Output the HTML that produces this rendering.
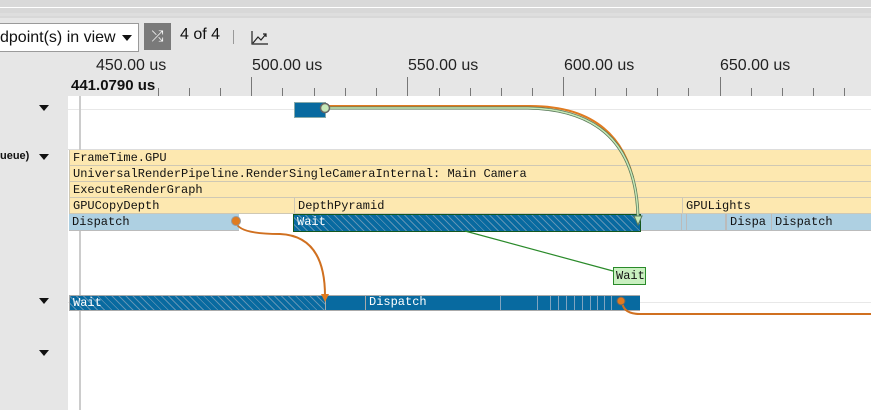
<!DOCTYPE html>
<html><head><style>
*{margin:0;padding:0;box-sizing:border-box}
body{width:871px;height:410px;overflow:hidden;background:#e6e6e6;position:relative;font-family:"Segoe UI","Liberation Sans",sans-serif}
.a{position:absolute}
.m{font-family:"Liberation Mono",monospace;font-size:12px;line-height:16px;color:#111;white-space:nowrap;overflow:hidden;padding-left:3px}
.y{background:#fde8b0;border-bottom:1px solid #cfc8b4;border-left:1px solid #cfc8b4}
.tri{width:0;height:0;border-left:5px solid transparent;border-right:5px solid transparent;border-top:6px solid #111}
.hatch{background:repeating-linear-gradient(45deg,#086aa0 0 4px,#5f93b5 4px 5px)}
</style></head><body>
<div class="a" style="left:0;top:0;width:871px;height:7px;background:#d9d9d9"></div>
<div class="a" style="left:0;top:7px;width:871px;height:1px;background:#fff"></div>
<div class="a" style="left:0;top:8px;width:871px;height:10px;background:#d8d8d8"></div>
<div class="a" style="left:0;top:13px;width:871px;height:3px;background:#dedede"></div>
<div class="a" style="left:-2px;top:23px;width:141px;height:29px;background:#fff;border:1px solid #9a9a9a;font-size:16px;line-height:27px;padding-left:1px;color:#111;white-space:nowrap;overflow:hidden">dpoint(s) in view</div>
<div class="a tri" style="left:122px;top:35px"></div>
<div class="a" style="left:144px;top:23px;width:27px;height:27px;background:#7a7a7a;color:#fff;font-size:15px;text-align:center;line-height:27px">⤮</div>
<div class="a" style="left:180px;top:26px;font-size:16px;color:#111">4 of 4</div>
<div class="a" style="left:233px;top:30px;width:1px;height:14px;background:#999"></div>
<svg class="a" style="left:251px;top:30px" width="18" height="16"><path d="M1 1V14H17M2 13L7 7L10 10L15 4M12 4H15V7" fill="none" stroke="#222" stroke-width="1.2"/></svg>
<div class="a" style="left:96px;top:57px;font-size:16px;color:#222">450.00 us</div>
<div class="a" style="left:252px;top:57px;font-size:16px;color:#222">500.00 us</div>
<div class="a" style="left:408px;top:57px;font-size:16px;color:#222">550.00 us</div>
<div class="a" style="left:564px;top:57px;font-size:16px;color:#222">600.00 us</div>
<div class="a" style="left:720px;top:57px;font-size:16px;color:#222">650.00 us</div>
<div class="a" style="left:71px;top:77px;font-size:15px;font-weight:bold;color:#111">441.0790 us</div>
<svg class="a" style="left:0;top:70px" width="871" height="27">
<g stroke="#777" stroke-width="1">
<path d="M158.5 18V27M189.5 18V27M220.5 18V27M282.5 18V27M314.5 18V27M345.5 18V27M376.5 18V27M439.5 18V27M470.5 18V27M501.5 18V27M532.5 18V27M595.5 18V27M626.5 18V27M657.5 18V27M688.5 18V27M751.5 18V27M782.5 18V27M813.5 18V27M844.5 18V27"/>
<path d="M251.5 7V27M407.5 7V27M563.5 7V27M720.5 7V27"/>
</g></svg>
<div class="a" style="left:68px;top:96px;width:803px;height:314px;background:#fff"></div>
<div class="a" style="left:68px;top:109px;width:803px;height:1px;background:#e8e8e8"></div>
<div class="a" style="left:68px;top:149px;width:803px;height:1px;background:#ddd"></div>
<div class="a" style="left:68px;top:302px;width:803px;height:1px;background:#e8e8e8"></div>
<div class="a" style="left:79px;top:96px;width:2px;height:314px;background:#ccc"></div>
<div class="a tri" style="left:39px;top:105px"></div>
<div class="a" style="left:0;top:150px;font-size:11px;font-weight:bold;color:#111">ueue)</div>
<div class="a tri" style="left:39px;top:154px"></div>
<div class="a tri" style="left:39px;top:298px"></div>
<div class="a tri" style="left:39px;top:350px"></div>
<div class="a" style="left:294px;top:102px;width:32px;height:16px;background:#086aa0;border:1px solid #8aa"></div>
<div class="a m y" style="left:69px;top:150px;width:802px;height:16px">FrameTime.GPU</div>
<div class="a m y" style="left:69px;top:166px;width:802px;height:16px">UniversalRenderPipeline.RenderSingleCameraInternal: Main Camera</div>
<div class="a m y" style="left:69px;top:182px;width:802px;height:16px">ExecuteRenderGraph</div>
<div class="a m y" style="left:69px;top:198px;width:225px;height:16px">GPUCopyDepth</div>
<div class="a m y" style="left:294px;top:198px;width:388px;height:16px">DepthPyramid</div>
<div class="a m y" style="left:682px;top:198px;width:189px;height:16px">GPULights</div>
<div class="a m" style="left:69px;top:214px;width:170px;height:17px;background:#aed0e2;border-bottom:1px solid #bbb">Dispatch</div>
<div class="a m hatch" style="left:293px;top:214px;width:348px;height:18px;border:1px solid #14571e;color:#fff;line-height:15px">Wait</div>
<div class="a" style="left:641px;top:214px;width:230px;height:17px;background:#aed0e2;border-bottom:1px solid #bbb"></div>
<div class="a" style="left:681px;top:214px;width:1px;height:17px;background:#bbb"></div>
<div class="a" style="left:686px;top:214px;width:1px;height:17px;background:#bbb"></div>
<div class="a" style="left:725px;top:214px;width:1px;height:17px;background:#bbb"></div>
<div class="a m" style="left:726px;top:214px;width:45px;height:17px;border-left:1px solid #bbb">Dispa</div>
<div class="a m" style="left:771px;top:214px;width:100px;height:17px;border-left:1px solid #bbb">Dispatch</div>
<div class="a m hatch" style="left:69px;top:295px;width:257px;height:16px;color:#fff;border:1px solid #aaa;line-height:14px">Wait</div>
<div class="a" style="left:326px;top:295px;width:314px;height:16px;background:#086aa0;border-top:1px solid #aaa;border-bottom:1px solid #aaa"></div>
<div class="a m" style="left:365px;top:295px;width:140px;height:16px;color:#fff;border-left:1px solid #aaa;line-height:14px">Dispatch</div>
<svg class="a" style="left:0;top:0" width="871" height="410">
<g stroke="#7fa4c0" stroke-width="1"><path d="M500.5 296V310M537.5 296V310M550.5 296V310M558.5 296V310M566.5 296V310M574.5 296V310M582.5 296V310M590.5 296V310M597.5 296V310M604.5 296V310M611.5 296V310"/></g>
<path d="M326 106H530Q636 106 638 218" fill="none" stroke="#e07b20" stroke-width="2"/>
<path d="M326 108H528Q636 110 638 218" fill="none" stroke="#5a7a5a" stroke-width="3"/>
<path d="M326 108H528Q636 110 638 218" fill="none" stroke="#c7e8b8" stroke-width="1.5"/>
<path d="M634 216L642 216L638 225Z" fill="#c7e8b8" stroke="#5a7a5a"/>
<circle cx="325" cy="108" r="4.5" fill="#c7e8b8" stroke="#666" stroke-width="1.5"/>
<path d="M236 222Q238 234 280 234Q325 236 325 296" fill="none" stroke="#d07020" stroke-width="2"/>
<path d="M321 294L329 294L325 302Z" fill="#e07b20"/>
<circle cx="236" cy="221" r="4.5" fill="#e07b20" stroke="#999"/>
<path d="M622 300Q622 314 640 314H871" fill="none" stroke="#d07020" stroke-width="2"/>
<circle cx="621" cy="301" r="4" fill="#e07b20" stroke="#666"/>
<path d="M465 231L613 271" stroke="#2a8a2a" stroke-width="1.2"/>
</svg>
<div class="a m" style="left:613px;top:267px;width:33px;height:18px;background:#c9f0c0;border:1px solid #2a8a2a;padding-left:2px;line-height:16px">Wait</div>
</body></html>
